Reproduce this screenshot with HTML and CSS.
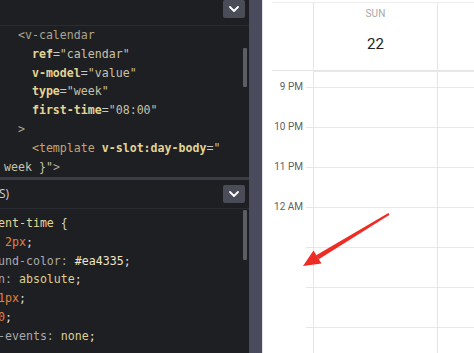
FILE: index.html
```html
<!DOCTYPE html>
<html>
<head>
<meta charset="utf-8">
<link rel="stylesheet" href="styles.css">
</head>
<body>
<div class="app">
  <section class="editor">
    <div class="pane pane-top">
      <div class="pane-head">
        <span class="pane-title"></span>
        <button class="fold"><svg width="10" height="6" viewBox="0 0 10 6"><path d="M1 1l4 4 4-4" fill="none" stroke="#fff" stroke-width="1.8" stroke-linecap="round" stroke-linejoin="round"/></svg></button>
      </div>
      <div class="code code-top">
        <pre><span class="tag">  &lt;v-calendar</span>
<span class="attr">    ref</span><span class="eq">=</span><span class="str">"calendar"</span>
<span class="attr">    v-model</span><span class="eq">=</span><span class="str">"value"</span>
<span class="attr">    type</span><span class="eq">=</span><span class="str">"week"</span>
<span class="attr">    first-time</span><span class="eq">=</span><span class="str">"08:00"</span>
<span class="tag">  &gt;</span>
<span class="tag2">    &lt;template</span> <span class="attr">v-slot:day-body</span><span class="eq">=</span><span class="str">"</span>
<span class="str">week }"</span><span class="tag">&gt;</span></pre>
        <div class="scrollbar sb-top"></div>
      </div>
    </div>
    <div class="splitter"></div>
    <div class="pane pane-bottom">
      <div class="pane-head">
        <span class="pane-title">S)</span>
        <button class="fold"><svg width="10" height="6" viewBox="0 0 10 6"><path d="M1 1l4 4 4-4" fill="none" stroke="#fff" stroke-width="1.8" stroke-linecap="round" stroke-linejoin="round"/></svg></button>
      </div>
      <div class="code code-bottom">
        <pre><span class="sel">ent-time</span> <span class="punc">{</span>
 <span class="num">2px</span><span class="semi">;</span>
<span class="prop">und-color:</span> <span class="hex">#ea4335</span><span class="semi">;</span>
<span class="prop">n:</span> <span class="val">absolute</span><span class="semi">;</span>
<span class="num">1px</span><span class="semi">;</span>
<span class="num">0</span><span class="semi">;</span>
<span class="prop">-events:</span> <span class="val">none</span><span class="semi">;</span></pre>
        <div class="scrollbar sb-bottom"></div>
      </div>
    </div>
  </section>
  <div class="gutter"></div>
  <section class="calendar">
    <div class="cal-head">
      <div class="head-gap"></div>
      <div class="day-head">
        <div class="weekday">SUN</div>
        <div class="daynum">22</div>
      </div>
      <div class="day-head"></div>
    </div>
    <div class="cal-body">
      <div class="times">
        <div class="time"><span>9 PM</span></div>
        <div class="time"><span>10 PM</span></div>
        <div class="time"><span>11 PM</span></div>
        <div class="time"><span>12 AM</span></div>
        <div class="time"><span></span></div>
        <div class="time"><span></span></div>
        <div class="time"><span></span></div>
      </div>
      <div class="day-col"></div>
      <div class="day-col"></div>
    </div>
  </section>
  <svg class="arrow" width="474" height="353" viewBox="0 0 474 353">
    <polygon points="389.6,214.8 388.4,212.9 316.2,255.2 318.8,259.3" fill="#ee2b24"/>
    <polygon points="303,266 321.5,263.5 313.5,250.5" fill="#ee2b24"/>
  </svg>
</div>
</body>
</html>
```

FILE: styles.css
```css
* { box-sizing: border-box; }
html, body { margin: 0; padding: 0; }
body { width: 474px; height: 353px; overflow: hidden; background: #fff; }

.app {
  position: relative;
  display: flex;
  width: 474px;
  height: 353px;
}

.editor {
  width: 249px;
  height: 353px;
  background: #1e1f23;
  display: flex;
  flex-direction: column;
  overflow: hidden;
}

.pane-head {
  display: flex;
  align-items: flex-start;
  justify-content: space-between;
  border-bottom: 1px solid #2b2c32;
  padding-right: 4px;
}
.pane-top .pane-head { height: 26px; }
.pane-bottom .pane-head { height: 29px; padding-top: 5px; }

.pane-title {
  font-family: "Open Sans", "Noto Sans", sans-serif;
  font-size: 12px;
  color: #cfcfd2;
  line-height: 18px;
  margin-left: -1px;
}

.fold {
  width: 22px;
  height: 18px;
  border: 0;
  border-radius: 2px;
  background: #4a4c58;
  padding: 0;
  display: flex;
  align-items: center;
  justify-content: center;
}

.code {
  position: relative;
  overflow: hidden;
}
.code-top { height: 151px; }
.code-bottom { flex: 1; padding-top: 5px; }

.code pre {
  margin: 0;
  font-family: "DejaVu Sans Mono", "Liberation Mono", monospace;
  font-size: 11.6px;
  line-height: 18.8px;
  white-space: pre;
  color: #c8c6b8;
}
.code-top pre { padding-left: 4px; }
.code-bottom pre { margin-left: -2px; }

.tag { color: #aba58f; }
.tag2 { color: #c1a574; }
.attr { color: #e3d493; font-weight: bold; }
.eq { color: #c9c9c9; }
.str { color: #c6c2aa; }

.sel { color: #e6d796; }
.punc { color: #cfcfcf; }
.num { color: #e5803a; }
.semi { color: #dcdcdc; }
.prop { color: #a9a9ab; }
.hex { color: #ece5c6; }
.val { color: #ddd08f; }

.scrollbar {
  position: absolute;
  right: 2px;
  width: 4px;
  background: #5b5d67;
  border-radius: 1px;
}
.sb-top { top: 22px; height: 39px; }
.sb-bottom { top: 1px; height: 50px; }

.splitter {
  height: 3px;
  background: #3a3b44;
}

.gutter {
  width: 13px;
  height: 353px;
  background: #4a4c5e;
}

.calendar {
  flex: 1;
  height: 353px;
  background: #fff;
  border-left: 1px solid #e2e5ee;
  padding-top: 2px;
  font-family: Roboto, "Noto Sans", sans-serif;
  overflow: hidden;
}

.cal-head {
  display: grid;
  grid-template-columns: 41px 124px 1fr;
  margin-left: 9px;
  height: 69px;
  border-top: 1px solid #ededed;
  border-bottom: 1px solid #e6e6e6;
}
.day-head {
  border-left: 1px solid #e6e6e6;
  text-align: center;
}
.weekday {
  font-size: 10px;
  color: #a7a7a7;
  margin-top: 5px;
  line-height: 12px;
  letter-spacing: 0.2px;
}
.daynum {
  font-size: 15px;
  color: #222;
  margin-top: 15px;
  line-height: 18px;
}

.cal-body {
  display: grid;
  grid-template-columns: 50px 124px 1fr;
  height: 290px;
}
.times {
  padding-top: 16px;
}
.time {
  height: 40px;
  display: flex;
  align-items: flex-start;
  justify-content: flex-end;
}
.time span {
  font-size: 10px;
  color: #5f5f5f;
  line-height: 12px;
  margin-top: -6px;
  margin-right: 3px;
}
.time::after {
  content: "";
  width: 7px;
  border-top: 1px solid #e6e6e6;
}
.day-col {
  border-left: 1px solid #e6e6e6;
  background-image: repeating-linear-gradient(to bottom, #e8e8e8 0, #e8e8e8 1px, transparent 1px, transparent 40px);
  background-position: 0 16px;
}

.arrow {
  position: absolute;
  left: 0;
  top: 0;
  pointer-events: none;
}
```
